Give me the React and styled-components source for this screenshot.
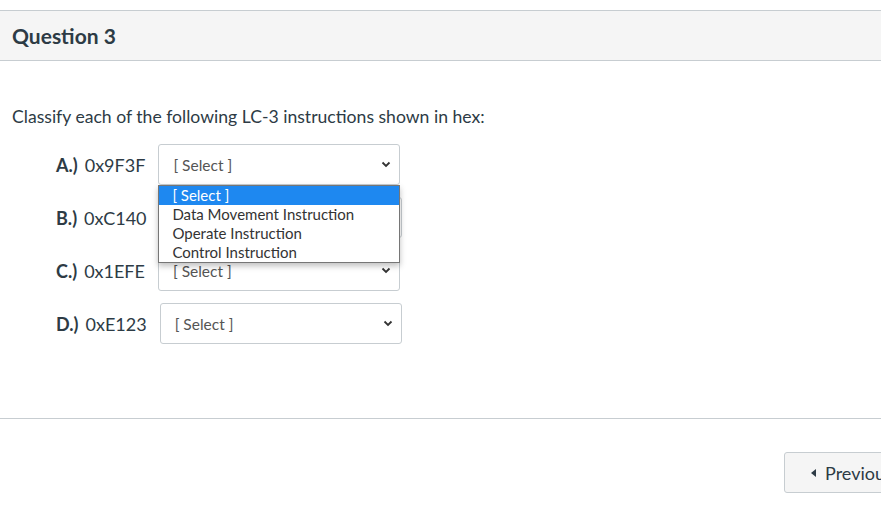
import styled, { createGlobalStyle } from 'styled-components';

const GlobalStyle = createGlobalStyle`
  body {
    margin: 0;
    background: #fff;
    font-family: Lato, "Open Sans", sans-serif;
    color: #2d3b45;
  }
`;

const Page = styled.div`
  padding-top: 10px;
  width: 881px;
  height: 521px;
  overflow: hidden;
  box-sizing: border-box;
`;

const Header = styled.div`
  height: 49px;
  display: flex;
  align-items: center;
  padding-left: 12px;
  background: #f5f5f5;
  border-top: 1px solid #c7cdd1;
  border-bottom: 1px solid #c7cdd1;
  font-size: 21px;
  font-weight: 700;
`;

const Body = styled.div`
  padding: 44px 12px 0;
`;

const Prompt = styled.p`
  margin: 0 0 15px;
  font-size: 17.6px;
  line-height: 24px;
`;

const Rows = styled.div`
  display: flex;
  flex-direction: column;
  gap: 12px;
  padding-left: 44px;
`;

const Row = styled.div`
  display: flex;
  align-items: center;
  gap: 13px;
  font-size: 18px;
`;

const Label = styled.span`
  white-space: nowrap;
  & b {
    font-weight: 700;
    margin-right: 7px;
  }
`;

const SelectWrap = styled.div`
  position: relative;
`;

const SelectBox = styled.div`
  width: 242px;
  height: 41px;
  box-sizing: border-box;
  border: 1px solid #c7cdd1;
  border-radius: 3px;
  background: #fff;
  display: flex;
  align-items: center;
  justify-content: space-between;
  padding: 0 8px 0 14px;
  font-size: 15.5px;
  color: #555;
`;

const Options = styled.ul`
  position: absolute;
  top: 41px;
  left: 0;
  width: 242px;
  box-sizing: border-box;
  margin: 0;
  padding: 0;
  list-style: none;
  background: #fff;
  border: 1px solid #767676;
  box-shadow: 0 3px 6px rgba(0, 0, 0, 0.25);
  z-index: 2;
`;

const Option = styled.li`
  height: 19px;
  line-height: 19px;
  padding-left: 13px;
  font-size: 15px;
  color: ${p => (p.$active ? '#fff' : '#333')};
  background: ${p => (p.$active ? '#1e88f0' : 'transparent')};
`;

const Divider = styled.div`
  margin-top: 74px;
  border-top: 1px solid #c7cdd1;
`;

const Footer = styled.div`
  display: flex;
  justify-content: flex-end;
  padding-top: 33px;
`;

const NavButton = styled.button`
  width: 130px;
  height: 41px;
  margin-right: -33px;
  padding: 0 0 0 26px;
  display: flex;
  align-items: center;
  gap: 9px;
  background: #f5f5f5;
  border: 1px solid #c7cdd1;
  border-radius: 3px;
  font-family: inherit;
  font-size: 18px;
  color: #2d3b45;
`;

const Chevron = () => (
  <svg width="10" height="7" viewBox="0 0 10 7">
    <path d="M1.5 1.5 L5 5 L8.5 1.5" fill="none" stroke="#333" strokeWidth="1.8" />
  </svg>
);

const Caret = () => (
  <svg width="5" height="8" viewBox="0 0 5 8">
    <path d="M5 0 L0 4 L5 8 Z" fill="#2d3b45" />
  </svg>
);

const items = [
  { key: 'A.)', hex: '0x9F3F', open: true },
  { key: 'B.)', hex: '0xC140' },
  { key: 'C.)', hex: '0x1EFE' },
  { key: 'D.)', hex: '0xE123' },
];

const options = ['[ Select ]', 'Data Movement Instruction', 'Operate Instruction', 'Control Instruction'];

export default function App() {
  return (
    <Page>
      <GlobalStyle />
      <Header>Question 3</Header>
      <Body>
        <Prompt>Classify each of the following LC-3 instructions shown in hex:</Prompt>
        <Rows>
          {items.map(item => (
            <Row key={item.key}>
              <Label>
                <b>{item.key}</b>
                {item.hex}
              </Label>
              <SelectWrap>
                <SelectBox>
                  <span>[ Select ]</span>
                  <Chevron />
                </SelectBox>
                {item.open && (
                  <Options>
                    {options.map((o, i) => (
                      <Option key={o} $active={i === 0}>
                        {o}
                      </Option>
                    ))}
                  </Options>
                )}
              </SelectWrap>
            </Row>
          ))}
        </Rows>
      </Body>
      <Divider />
      <Footer>
        <NavButton>
          <Caret />
          Previous
        </NavButton>
      </Footer>
    </Page>
  );
}
